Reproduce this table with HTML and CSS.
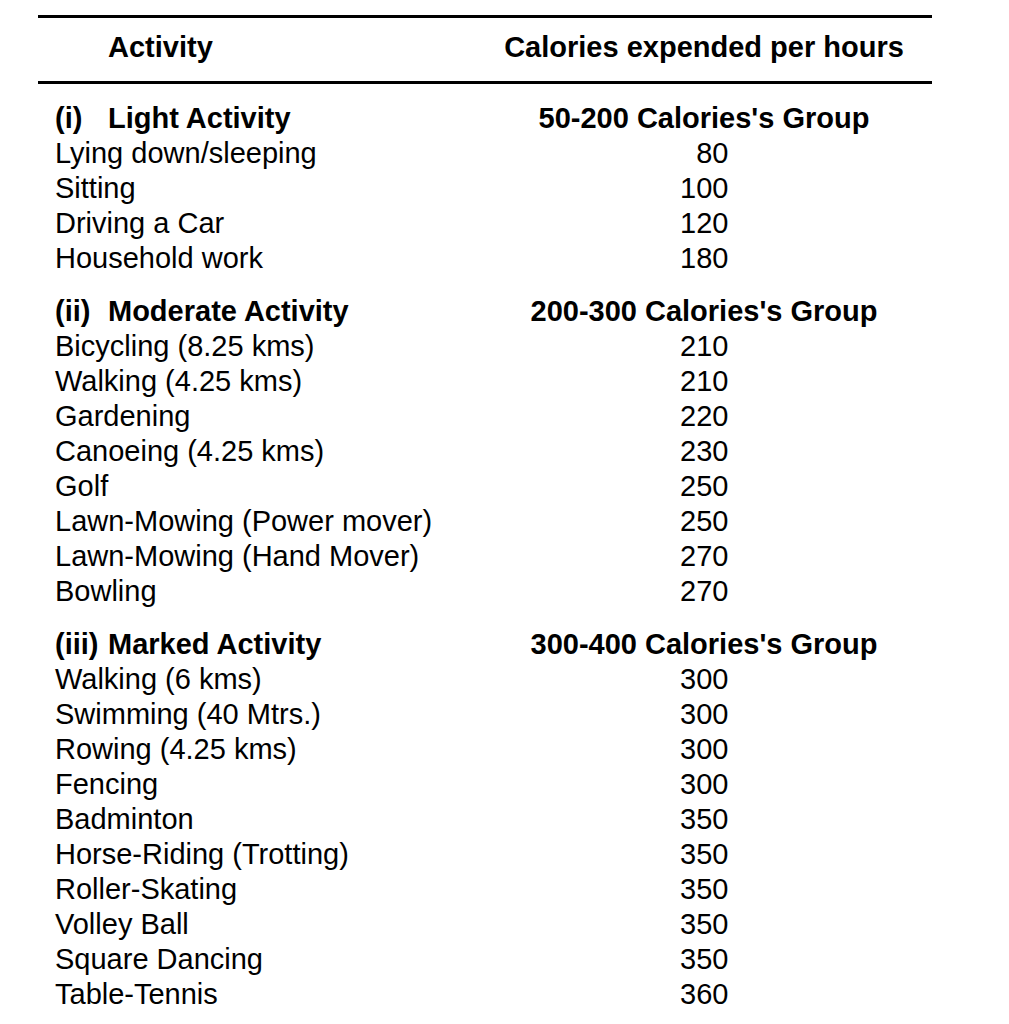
FILE: index.html
```html
<!DOCTYPE html>
<html lang="en">
<head>
<meta charset="utf-8">
<title>Calories expended per hour by activity</title>
<link rel="stylesheet" href="styles.css">
</head>
<body>
<div class="sheet">
  <div class="head-row">
    <div class="head-activity">Activity</div>
    <div class="head-cal">Calories expended per hours</div>
  </div>

  <div class="section section-first">
    <div class="row group">
      <div class="act"><span class="num">(i)</span>Light Activity</div>
      <div class="cal">50-200 Calories's Group</div>
    </div>
    <div class="row"><div class="act">Lying down/sleeping</div><div class="cal"><span class="val">80</span></div></div>
    <div class="row"><div class="act">Sitting</div><div class="cal"><span class="val">100</span></div></div>
    <div class="row"><div class="act">Driving a Car</div><div class="cal"><span class="val">120</span></div></div>
    <div class="row"><div class="act">Household work</div><div class="cal"><span class="val">180</span></div></div>
  </div>

  <div class="section">
    <div class="row group">
      <div class="act"><span class="num">(ii)</span>Moderate Activity</div>
      <div class="cal">200-300 Calories's Group</div>
    </div>
    <div class="row"><div class="act">Bicycling (8.25 kms)</div><div class="cal"><span class="val">210</span></div></div>
    <div class="row"><div class="act">Walking (4.25 kms)</div><div class="cal"><span class="val">210</span></div></div>
    <div class="row"><div class="act">Gardening</div><div class="cal"><span class="val">220</span></div></div>
    <div class="row"><div class="act">Canoeing (4.25 kms)</div><div class="cal"><span class="val">230</span></div></div>
    <div class="row"><div class="act">Golf</div><div class="cal"><span class="val">250</span></div></div>
    <div class="row"><div class="act">Lawn-Mowing (Power mover)</div><div class="cal"><span class="val">250</span></div></div>
    <div class="row"><div class="act">Lawn-Mowing (Hand Mover)</div><div class="cal"><span class="val">270</span></div></div>
    <div class="row"><div class="act">Bowling</div><div class="cal"><span class="val">270</span></div></div>
  </div>

  <div class="section">
    <div class="row group">
      <div class="act"><span class="num">(iii)</span>Marked Activity</div>
      <div class="cal">300-400 Calories's Group</div>
    </div>
    <div class="row"><div class="act">Walking (6 kms)</div><div class="cal"><span class="val">300</span></div></div>
    <div class="row"><div class="act">Swimming (40 Mtrs.)</div><div class="cal"><span class="val">300</span></div></div>
    <div class="row"><div class="act">Rowing (4.25 kms)</div><div class="cal"><span class="val">300</span></div></div>
    <div class="row"><div class="act">Fencing</div><div class="cal"><span class="val">300</span></div></div>
    <div class="row"><div class="act">Badminton</div><div class="cal"><span class="val">350</span></div></div>
    <div class="row"><div class="act">Horse-Riding (Trotting)</div><div class="cal"><span class="val">350</span></div></div>
    <div class="row"><div class="act">Roller-Skating</div><div class="cal"><span class="val">350</span></div></div>
    <div class="row"><div class="act">Volley Ball</div><div class="cal"><span class="val">350</span></div></div>
    <div class="row"><div class="act">Square Dancing</div><div class="cal"><span class="val">350</span></div></div>
    <div class="row"><div class="act">Table-Tennis</div><div class="cal"><span class="val">360</span></div></div>
  </div>
</div>
</body>
</html>
```

FILE: styles.css
```css
html, body {
  margin: 0;
  padding: 0;
  background: #ffffff;
}

body {
  font-family: "Liberation Sans", Arial, sans-serif;
  font-size: 29px;
  line-height: 35px;
  color: #000000;
}

.sheet {
  width: 894px;
  margin: 15px 0 0 38px;
}

.head-row {
  display: grid;
  grid-template-columns: 1fr 456px;
  border-top: 3px solid #000;
  border-bottom: 3px solid #000;
  padding: 12px 0 16px 17px;
  font-weight: bold;
}

.head-activity {
  padding-left: 53px;
}

.head-cal {
  text-align: center;
}

.section {
  padding-left: 17px;
  margin-top: 18px;
}

.section-first {
  margin-top: 17px;
}

.row {
  display: grid;
  grid-template-columns: 1fr 456px;
  height: 35px;
  white-space: nowrap;
}

.group {
  font-weight: bold;
}

.num {
  display: inline-block;
  width: 53px;
}

.cal {
  text-align: center;
}

.val {
  display: inline-block;
  width: 49px;
  text-align: right;
}
```
